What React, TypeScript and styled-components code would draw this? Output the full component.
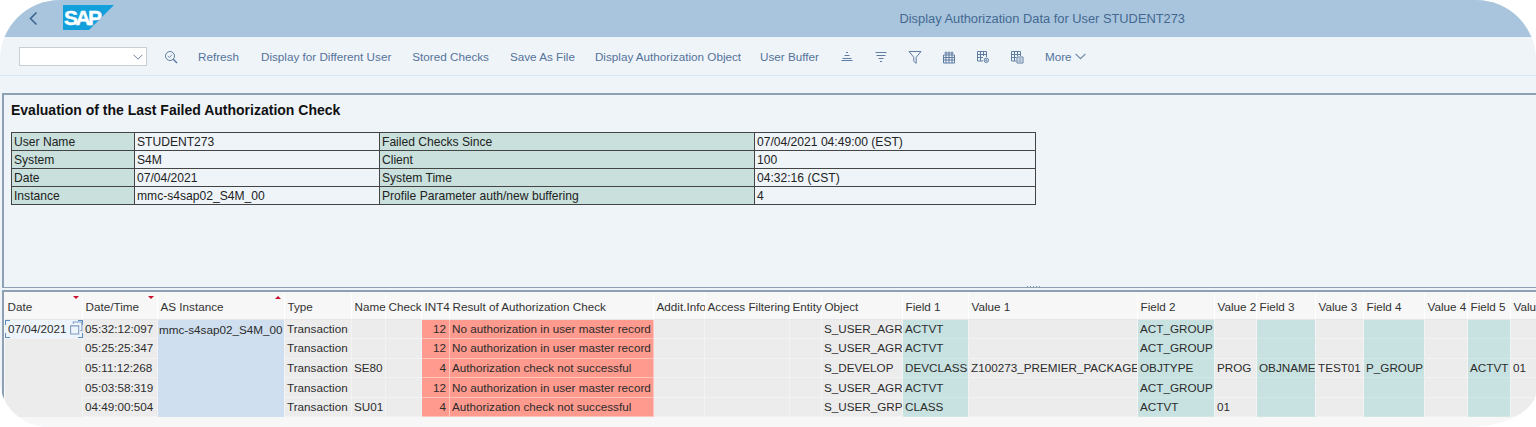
import React from "react";
import styled, { createGlobalStyle } from "styled-components";

const Global = createGlobalStyle`
  html, body { margin: 0; padding: 0; background: #fff; }
  body { font-family: "Liberation Sans", Arial, sans-serif; }
`;

const Window = styled.div`
  width: 1536px;
  height: 427px;
  overflow: hidden;
  display: flex;
  flex-direction: column;
  background: #eff4f9;
  border-radius: 60px 60px 70px 50px / 60px 60px 36px 46px;
`;

const Shell = styled.header`
  height: 37px;
  flex: none;
  display: flex;
  align-items: center;
  background: #a9c5de;
  padding-left: 28px;
`;

const BackButton = styled.span`
  display: flex;
  width: 35px;
`;

const Logo = styled.svg`
  width: 51px;
  height: 25px;
  margin-top: -2px;
`;

const ShellTitle = styled.h1`
  margin: 0 351px 0 auto;
  font-size: 12.85px;
  font-weight: 400;
  color: #44688f;
`;

const Toolbar = styled.nav`
  height: 38px;
  flex: none;
  box-sizing: border-box;
  margin-top: 1px;
  padding-left: 19px;
  display: flex;
  align-items: center;
  border-bottom: 1px solid #d8e5f3;
`;

const Select = styled.div`
  width: 128px;
  height: 19px;
  box-sizing: border-box;
  border: 1px solid #c9ced3;
  background: #fff;
  display: flex;
  align-items: center;
  justify-content: flex-end;
  padding-right: 3px;
`;

const ToolIcon = styled.span`
  width: 34px;
  display: flex;
  justify-content: center;
  flex: none;
`;

const SearchIcon = styled(ToolIcon)`
  margin: 0 10px 0 7px;
`;

const ToolButton = styled.span<{ $gap?: number }>`
  font-size: 11.7px;
  color: #54739a;
  white-space: nowrap;
  margin-right: ${(p) => p.$gap ?? 21}px;
`;

const MoreButton = styled.span`
  font-size: 11.7px;
  color: #54739a;
  display: flex;
  align-items: center;
  gap: 3px;
  margin-left: 11px;
`;

const Spacer = styled.div`
  height: 17px;
  flex: none;
`;

const InfoPanel = styled.section`
  height: 195px;
  flex: none;
  box-sizing: border-box;
  margin-left: 2px;
  border-top: 2px solid #8ea1b4;
  border-left: 2px solid #8ea1b4;
  border-bottom: 1px solid #8ea1b4;
  padding: 7px 0 0 7px;
`;

const PanelTitle = styled.h2`
  margin: 0 0 14px;
  font-size: 14px;
  line-height: 16px;
  font-weight: 700;
  color: #111;
`;

const InfoTable = styled.table`
  border-collapse: collapse;
  table-layout: fixed;
  width: 1024px;
  border: 1px solid #444;
`;

const Col = styled.col<{ $w: number }>`
  width: ${(p) => p.$w}px;
`;

const InfoCell = styled.td<{ $label?: boolean }>`
  height: 18px;
  padding: 0 1px 0 2px;
  box-sizing: border-box;
  font-size: 12.1px;
  line-height: 16px;
  color: #222;
  border: 1px solid #444;
  background: ${(p) => (p.$label ? "#c9e0dc" : "#eff4f9")};
  white-space: nowrap;
  overflow: hidden;
`;

const Splitter = styled.div`
  height: 2px;
  flex: none;
  position: relative;
  background: #eff4f9;
  &::after {
    content: "";
    position: absolute;
    left: 1027px;
    top: -2px;
    width: 15px;
    height: 1px;
    background: repeating-linear-gradient(90deg, #7d93aa 0 1px, transparent 1px 3px);
  }
`;

const GridPanel = styled.section`
  flex: 1;
  margin-left: 2px;
  padding: 2px 0 0 1px;
  border-top: 2px solid #8ea1b4;
  border-left: 2px solid #8ea1b4;
  background: #f7f7f7;
  overflow: hidden;
`;

const Grid = styled.table`
  border-collapse: separate;
  border-spacing: 0;
  table-layout: fixed;
  width: 1546px;
`;

const HeadCell = styled.th`
  position: relative;
  height: 25.5px;
  padding: 0 0 0 2.5px;
  box-sizing: border-box;
  font-size: 11.7px;
  font-weight: 400;
  text-align: left;
  color: #333;
  background: #f7f7f7;
  border-right: 1px solid #fff;
  border-bottom: 1px solid #e6e6e6;
  white-space: nowrap;
`;

const SortMark = styled.span<{ $up?: boolean }>`
  position: absolute;
  right: 3px;
  top: 2px;
  width: 0;
  height: 0;
  border-left: 3.5px solid transparent;
  border-right: 3.5px solid transparent;
  ${(p) =>
    p.$up
      ? "border-bottom: 3.5px solid #c8102e;"
      : "border-top: 3.5px solid #c8102e;"}
`;

const toneBg: Record<string, string> = {
  plain: "#ececec",
  red: "#ff9a8e",
  teal: "#c7e2e0",
  blue: "#cfdff0",
};

const Cell = styled.td<{ $tone?: string; $right?: boolean; $merged?: boolean }>`
  height: 19.6px;
  padding: 0 ${(p) => (p.$right ? "3px" : "0")} 0 ${(p) => (p.$right ? "0" : "2px")};
  box-sizing: border-box;
  font-size: 11.7px;
  line-height: 16px;
  color: #2c2c2c;
  text-align: ${(p) => (p.$right ? "right" : "left")};
  background: ${(p) => toneBg[p.$tone ?? "plain"]};
  border-right: 1px solid ${(p) => (p.$tone === "red" ? "#ffc4bc" : "#f3f3f3")};
  border-bottom: 1px solid
    ${(p) =>
      p.$merged
        ? toneBg[p.$tone ?? "plain"]
        : p.$tone === "red"
        ? "#ffc4bc"
        : p.$tone === "teal"
        ? "#d2e6e5"
        : "#f3f3f3"};
  white-space: nowrap;
  overflow: hidden;
  vertical-align: middle;
`;

const BlueCell = styled(Cell)`
  vertical-align: top;
  padding: 2px 0 0 1px;
  border-bottom: 0;
`;

const FocusCell = styled(Cell)`
  position: relative;
  background-color: #eef4fb;
  padding-left: 3px;
  border-right: 0;
  overflow: visible;
  &::before {
    content: "";
    position: absolute;
    inset: 0;
    pointer-events: none;
    background:
      linear-gradient(#5b8cc0, #5b8cc0) 0 0 / 5px 1px no-repeat,
      linear-gradient(#5b8cc0, #5b8cc0) 0 0 / 1px 5px no-repeat,
      linear-gradient(#5b8cc0, #5b8cc0) 100% 0 / 5px 1px no-repeat,
      linear-gradient(#5b8cc0, #5b8cc0) 100% 0 / 1px 5px no-repeat,
      linear-gradient(#5b8cc0, #5b8cc0) 0 100% / 5px 1px no-repeat,
      linear-gradient(#5b8cc0, #5b8cc0) 0 100% / 1px 5px no-repeat,
      linear-gradient(#5b8cc0, #5b8cc0) 100% 100% / 5px 1px no-repeat,
      linear-gradient(#5b8cc0, #5b8cc0) 100% 100% / 1px 5px no-repeat;
  }
`;

const CopyGlyph = styled.svg`
  position: absolute;
  right: 0;
  top: 1px;
  width: 14px;
  height: 14px;
`;

const Chevron = ({ size = 10, color = "#6d86a3" }: { size?: number; color?: string }) => (
  <svg width={size} height={size * 0.6} viewBox="0 0 10 6" fill="none">
    <path d="M.5.7 5 5.2 9.5.7" stroke={color} strokeWidth="1" />
  </svg>
);

const Glyph = ({ children }: { children: React.ReactNode }) => (
  <svg width="14" height="14" viewBox="0 0 14 14" fill="none" stroke="#5f7da1" strokeWidth="1">
    {children}
  </svg>
);

const SortAsc = () => (
  <Glyph>
    <path d="M6 2.5h2M4.5 5.5h5M2.5 8.5h9M1.5 10.5h11" />
  </Glyph>
);
const SortDesc = () => (
  <Glyph>
    <path d="M1.5 2.5h11M2.5 5.5h9M4.5 8.5h5M6 11.5h2" />
  </Glyph>
);
const Funnel = () => (
  <Glyph>
    <path d="M1 1.5h12L8.2 7.3v6L5.8 11.3v-4Z" />
  </Glyph>
);
const TableFull = () => (
  <Glyph>
    <path d="M2.5 3h9M1.5 5h11v8h-11zM1.5 7.5h11M1.5 10h11M4 1.5V13M7 1.5V13M10 1.5V13" />
  </Glyph>
);
const TableGear = () => (
  <Glyph>
    <path d="M7 11H1.5V1.5h9V7M1.5 4.5h9M1.5 7.5h5.5M4.5 1.5V11M7.5 1.5V6" />
    <circle cx="10.3" cy="10.3" r="2.2" />
    <circle cx="10.3" cy="10.3" r=".7" />
  </Glyph>
);
const TableDoc = () => (
  <Glyph>
    <path d="M6.5 11H1.5V1.5h9V6M1.5 4.5h9M1.5 7.5h5M4.5 1.5V11M7.5 1.5V6" />
    <path d="M7 7h6v6H7zM8.5 9h3M8.5 11h3" />
  </Glyph>
);

const columns: [string, number][] = [
  ["Date", 78],
  ["Date/Time", 75],
  ["AS Instance", 127],
  ["Type", 67],
  ["Name", 34],
  ["Check", 36],
  ["INT4", 28],
  ["Result of Authorization Check", 204],
  ["Addit.Info", 51],
  ["Access Filtering", 85],
  ["Entity", 32],
  ["Object", 81],
  ["Field 1", 66],
  ["Value 1", 169],
  ["Field 2", 77],
  ["Value 2", 42],
  ["Field 3", 59],
  ["Value 3", 48],
  ["Field 4", 61],
  ["Value 4", 43],
  ["Field 5", 43],
  ["Value 5", 40],
];

const NO_AUTH = "No authorization in user master record";
const NOT_OK = "Authorization check not successful";

const rows = [
  { time: "05:32:12:097", name: "", code: "12", result: NO_AUTH, object: "S_USER_AGR", values: ["ACTVT", "", "ACT_GROUP", "", "", "", "", "", "", ""] },
  { time: "05:25:25:347", name: "", code: "12", result: NO_AUTH, object: "S_USER_AGR", values: ["ACTVT", "", "ACT_GROUP", "", "", "", "", "", "", ""] },
  { time: "05:11:12:268", name: "SE80", code: "4", result: NOT_OK, object: "S_DEVELOP", values: ["DEVCLASS", "Z100273_PREMIER_PACKAGE", "OBJTYPE", "PROG", "OBJNAME", "TEST01", "P_GROUP", "", "ACTVT", "01"] },
  { time: "05:03:58:319", name: "", code: "12", result: NO_AUTH, object: "S_USER_AGR", values: ["ACTVT", "", "ACT_GROUP", "", "", "", "", "", "", ""] },
  { time: "04:49:00:504", name: "SU01", code: "4", result: NOT_OK, object: "S_USER_GRP", values: ["CLASS", "", "ACTVT", "01", "", "", "", "", "", ""] },
];

const info = [
  ["User Name", "STUDENT273", "Failed Checks Since", "07/04/2021 04:49:00 (EST)"],
  ["System", "S4M", "Client", "100"],
  ["Date", "07/04/2021", "System Time", "04:32:16 (CST)"],
  ["Instance", "mmc-s4sap02_S4M_00", "Profile Parameter auth/new buffering", "4"],
];

export default function App() {
  return (
    <>
      <Global />
      <Window>
        <Shell>
          <BackButton>
            <svg width="11" height="15" viewBox="0 0 11 15" fill="none">
              <path d="M8.5 1.5 2.5 7.5l6 6" stroke="#3d6590" strokeWidth="1.6" />
            </svg>
          </BackButton>
          <Logo viewBox="0 0 51 25">
            <polygon points="0,0 51,0 26,25 0,25" fill="#12a0dc" />
            <text x="1" y="20" fontFamily="Liberation Sans" fontWeight="700" fontSize="21" letterSpacing="-2.6" fill="#fff" stroke="#fff" strokeWidth=".4">
              SAP
            </text>
          </Logo>
          <ShellTitle>Display Authorization Data for User STUDENT273</ShellTitle>
        </Shell>
        <Toolbar>
          <Select>
            <Chevron />
          </Select>
          <SearchIcon>
            <svg width="14" height="14" viewBox="0 0 14 14" fill="none" stroke="#5f7da1">
              <circle cx="6" cy="6" r="4.5" />
              <path d="m9.3 9.3 3.7 3.7" strokeWidth="1.5" />
              <path d="M4 6l1.5 1.5L8 4.5" strokeWidth=".8" />
            </svg>
          </SearchIcon>
          <ToolButton $gap={22}>Refresh</ToolButton>
          <ToolButton>Display for Different User</ToolButton>
          <ToolButton>Stored Checks</ToolButton>
          <ToolButton $gap={20}>Save As File</ToolButton>
          <ToolButton $gap={19}>Display Authorization Object</ToolButton>
          <ToolButton $gap={11}>User Buffer</ToolButton>
          <ToolIcon><SortAsc /></ToolIcon>
          <ToolIcon><SortDesc /></ToolIcon>
          <ToolIcon><Funnel /></ToolIcon>
          <ToolIcon><TableFull /></ToolIcon>
          <ToolIcon><TableGear /></ToolIcon>
          <ToolIcon><TableDoc /></ToolIcon>
          <MoreButton>
            More <Chevron size={11} />
          </MoreButton>
        </Toolbar>
        <Spacer />
        <InfoPanel>
          <PanelTitle>Evaluation of the Last Failed Authorization Check</PanelTitle>
          <InfoTable>
            <colgroup>
              <Col $w={123} />
              <Col $w={245} />
              <Col $w={375} />
              <Col $w={281} />
            </colgroup>
            <tbody>
              {info.map((r) => (
                <tr key={r[0]}>
                  {r.map((c, i) => (
                    <InfoCell key={i} $label={i % 2 === 0}>{c}</InfoCell>
                  ))}
                </tr>
              ))}
            </tbody>
          </InfoTable>
        </InfoPanel>
        <Splitter />
        <GridPanel>
          <Grid>
            <colgroup>
              {columns.map(([n, w]) => (
                <Col key={n} $w={w} />
              ))}
            </colgroup>
            <thead>
              <tr>
                {columns.map(([n], i) => (
                  <HeadCell key={n}>
                    {n}
                    {i < 2 && <SortMark />}
                    {i === 2 && <SortMark $up />}
                  </HeadCell>
                ))}
              </tr>
            </thead>
            <tbody>
              {rows.map((r, idx) => (
                <tr key={r.time}>
                  {idx === 0 ? (
                    <FocusCell>
                      07/04/2021
                      <CopyGlyph viewBox="0 0 13 13" fill="none" stroke="#7f9cbd">
                        <path d="M1.5 4.5h7.5v7.5H1.5zM4 2.5V1h8v8h-1.5" />
                      </CopyGlyph>
                    </FocusCell>
                  ) : (
                    <Cell $merged />
                  )}
                  <Cell>{r.time}</Cell>
                  {idx === 0 && (
                    <BlueCell rowSpan={5} $tone="blue">
                      mmc-s4sap02_S4M_00
                    </BlueCell>
                  )}
                  <Cell>Transaction</Cell>
                  <Cell>{r.name}</Cell>
                  <Cell />
                  <Cell $tone="red" $right>{r.code}</Cell>
                  <Cell $tone="red">{r.result}</Cell>
                  <Cell />
                  <Cell />
                  <Cell />
                  <Cell>{r.object}</Cell>
                  {r.values.map((v, i) => (
                    <Cell key={i} $tone={i % 2 === 0 ? "teal" : "plain"}>{v}</Cell>
                  ))}
                </tr>
              ))}
            </tbody>
          </Grid>
        </GridPanel>
      </Window>
    </>
  );
}
